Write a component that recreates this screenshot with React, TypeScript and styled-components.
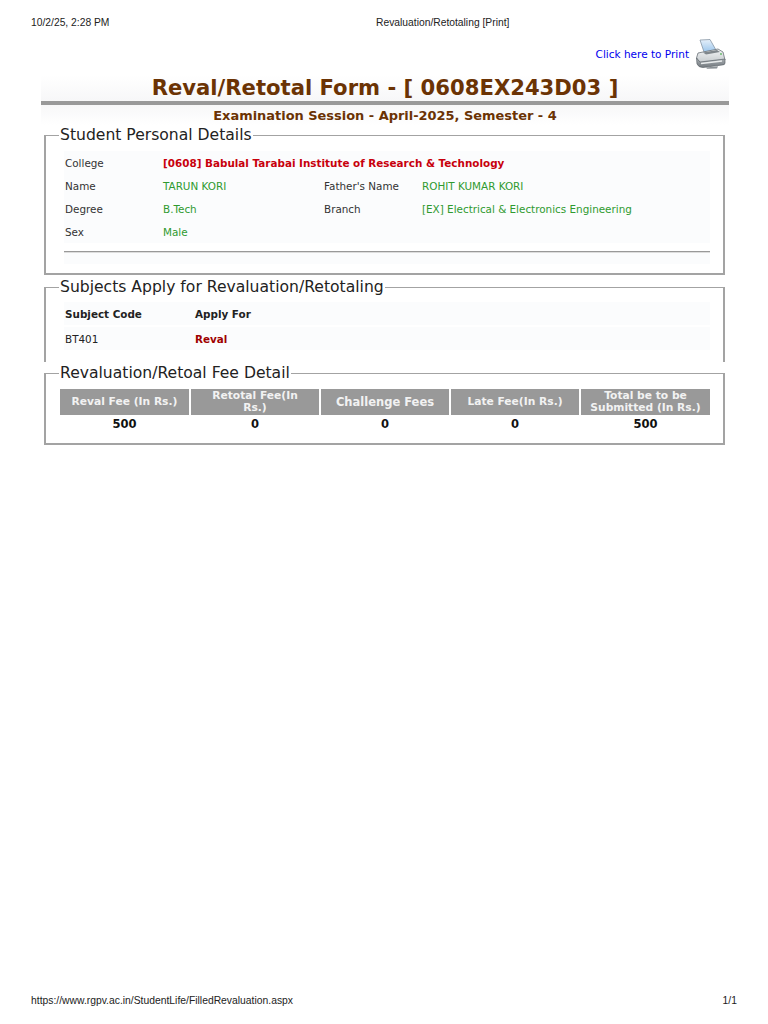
import React from "react";
import styled, { createGlobalStyle } from "styled-components";

const Global = createGlobalStyle`
  html, body { margin: 0; padding: 0; background: #fff; }
  body { font-family: "DejaVu Sans", Verdana, sans-serif; }
`;

const Page = styled.div`
  width: 768px;
  height: 1024px;
  display: flex;
  flex-direction: column;
  overflow: hidden;
  background: #fff;
`;

const PrintHeader = styled.header`
  display: grid;
  grid-template-columns: 345px auto 1fr;
  height: 12px;
  margin-top: 17px;
  padding: 0 31px;
  font: 10.3px/12px "Liberation Sans", Arial, sans-serif;
  color: #222;
`;

const PrintLink = styled.div`
  display: flex;
  justify-content: flex-end;
  align-items: center;
  gap: 6px;
  height: 30px;
  margin-top: 10px;
  padding-right: 42px;
  font-size: 10.5px;
  color: #0000ee;
`;

const Main = styled.main`
  display: flex;
  flex-direction: column;
  margin: 6px 39px 0 41px;
`;

const TitleBand = styled.div`
  height: 26px;
  background: linear-gradient(#ffffff, #f7f7f8);
  border-bottom: 4px solid #999;
  text-align: center;
  color: #6b3304;
  font-size: 21.15px;
  line-height: 26px;
  font-weight: 700;
`;

const SessionBand = styled.div`
  height: 20px;
  background: linear-gradient(#f7f7f8, #ffffff);
  text-align: center;
  color: #6b3304;
  font-size: 12.95px;
  line-height: 21px;
  font-weight: 700;
`;

const Section = styled.fieldset<{ $open?: boolean; $gap: number; $pad: number }>`
  margin: ${(p) => p.$gap}px 4px 0 3px;
  padding: 0 13px ${(p) => p.$pad}px 13px;
  border: 1px solid #a3a3a3;
  border-width: 1px 2px 2px 2px;
  border-bottom-width: ${(p) => (p.$open ? 0 : 2)}px;
  min-width: 0;
`;

const SectionTitle = styled.legend`
  padding: 0 1px;
  margin-left: 0;
  font-size: 15.6px;
  line-height: 18px;
  color: #222;
`;

const Rows = styled.div<{ $top: number }>`
  display: flex;
  flex-direction: column;
  margin-top: ${(p) => p.$top}px;
`;

const Row = styled.div`
  display: grid;
  grid-template-columns: 98px 161px 98px 1fr;
  align-items: center;
  height: 23px;
  padding-left: 1px;
  margin-left: 5px;
  background: #fbfcfd;
  font-size: 10.4px;
  color: #333;
`;

const Label = styled.span`
  color: #333;
`;

const Value = styled.span`
  color: #2f9a2f;
`;

const College = styled.span`
  grid-column: 2 / 5;
  color: #c8000c;
  font-weight: 700;
`;

const RuleRow = styled.div`
  height: 21px;
  margin-left: 5px;
  padding-top: 8px;
  box-sizing: border-box;
  background: linear-gradient(#fff 0, #fff 8px, #fbfcfd 8px);
`;

const Rule = styled.div`
  height: 1px;
  background: #999;
  box-shadow: 0 1px 0 #ddd;
`;

const SubjectRow = styled.div<{ $bold?: boolean }>`
  display: grid;
  grid-template-columns: 130px 1fr;
  align-items: center;
  height: 23px;
  margin: 0 0 2px 5px;
  padding-left: 1px;
  background: #fbfcfd;
  font-size: 10.4px;
  font-weight: ${(p) => (p.$bold ? 700 : 400)};
  color: #222;
`;

const Reval = styled.span`
  color: #a00000;
  font-weight: 700;
`;

const FeeTable = styled.div`
  display: grid;
  grid-template-columns: 129px repeat(3, 128px) 129px;
  column-gap: 2px;
  margin: 7px 0 0 1px;
`;

const FeeHead = styled.div<{ $large?: boolean }>`
  display: flex;
  align-items: center;
  justify-content: center;
  height: 26px;
  padding: 0 9px;
  background: #999;
  color: #f2f2f2;
  text-align: center;
  font-weight: 700;
  font-size: ${(p) => (p.$large ? 11.5 : 10.7)}px;
  line-height: 12.5px;
`;

const FeeValue = styled.div`
  height: 19px;
  text-align: center;
  color: #111;
  font-weight: 700;
  font-size: 11.5px;
  line-height: 19px;
`;

const PrintFooter = styled.footer`
  display: flex;
  justify-content: space-between;
  margin-top: auto;
  margin-bottom: 17px;
  padding: 0 31px;
  font: 10.35px/12px "Liberation Sans", Arial, sans-serif;
  color: #222;
`;

const PrinterIcon = () => (
  <svg width="31" height="30" viewBox="0 0 31 30" aria-hidden="true">
    <defs>
      <linearGradient id="paper" x1="0" y1="0" x2="0" y2="1">
        <stop offset="0" stopColor="#e6f0fa" />
        <stop offset="1" stopColor="#9cc6ec" />
      </linearGradient>
      <linearGradient id="body" x1="0" y1="0" x2="0" y2="1">
        <stop offset="0" stopColor="#f2f4f5" />
        <stop offset="1" stopColor="#c4c9cc" />
      </linearGradient>
      <linearGradient id="base" x1="0" y1="0" x2="0" y2="1">
        <stop offset="0" stopColor="#aab0b4" />
        <stop offset="1" stopColor="#73797e" />
      </linearGradient>
    </defs>
    <path d="M5 1 L15 0.5 L21 11 L9 13 Z" fill="url(#paper)" stroke="#7b8b9b" strokeWidth="0.7" />
    <path d="M3 14 L23 10 L28 13 L30 21 L5 24 L1.5 19 Z" fill="url(#body)" stroke="#6b7278" strokeWidth="0.8" />
    <path d="M8 13.5 L22 11 L25 13 L11 15.5 Z" fill="#7f868b" />
    <path d="M1.5 19 L5 23 L30 20 L30 24 Q30 26 27 26 L8 28.5 Q3.5 28.5 2 25 Z" fill="url(#base)" stroke="#5f666b" strokeWidth="0.7" />
    <path d="M6 24.5 L27 22" stroke="#e8ebec" strokeWidth="1.4" />
    <path d="M11 28.5 L23 27.2 L22 29.5 L12 29.8 Z" fill="#8a9095" />
    <circle cx="26" cy="15" r="0.9" fill="#62b862" />
  </svg>
);

const fees = [
  { head: "Reval Fee (In Rs.)", value: "500" },
  { head: "Retotal Fee(In Rs.)", value: "0" },
  { head: "Challenge Fees", value: "0", large: true },
  { head: "Late Fee(In Rs.)", value: "0" },
  { head: "Total be to be Submitted (In Rs.)", value: "500" },
];

export default function App() {
  return (
    <Page>
      <Global />
      <PrintHeader>
        <span>10/2/25, 2:28 PM</span>
        <span>Revaluation/Retotaling [Print]</span>
        <span />
      </PrintHeader>
      <PrintLink>
        <span>Click here to Print</span>
        <PrinterIcon />
      </PrintLink>
      <Main>
        <TitleBand>Reval/Retotal Form - [ 0608EX243D03 ]</TitleBand>
        <SessionBand>Examination Session - April-2025, Semester - 4</SessionBand>

        <Section $gap={1} $pad={9}>
          <SectionTitle>Student Personal Details</SectionTitle>
          <Rows $top={7}>
            <Row>
              <Label>College</Label>
              <College>[0608] Babulal Tarabai Institute of Research &amp; Technology</College>
            </Row>
            <Row>
              <Label>Name</Label>
              <Value>TARUN KORI</Value>
              <Label>Father's Name</Label>
              <Value>ROHIT KUMAR KORI</Value>
            </Row>
            <Row>
              <Label>Degree</Label>
              <Value>B.Tech</Value>
              <Label>Branch</Label>
              <Value>[EX] Electrical &amp; Electronics Engineering</Value>
            </Row>
            <Row>
              <Label>Sex</Label>
              <Value>Male</Value>
            </Row>
            <RuleRow>
              <Rule />
            </RuleRow>
          </Rows>
        </Section>

        <Section $gap={3} $pad={10} $open>
          <SectionTitle>Subjects Apply for Revaluation/Retotaling</SectionTitle>
          <Rows $top={6}>
            <SubjectRow $bold>
              <span>Subject Code</span>
              <span>Apply For</span>
            </SubjectRow>
            <SubjectRow>
              <span>BT401</span>
              <Reval>Reval</Reval>
            </SubjectRow>
          </Rows>
        </Section>

        <Section $gap={2} $pad={9}>
          <SectionTitle>Revaluation/Retoal Fee Detail</SectionTitle>
          <FeeTable>
            {fees.map((f) => (
              <FeeHead key={f.head} $large={f.large}>
                {f.head}
              </FeeHead>
            ))}
            {fees.map((f) => (
              <FeeValue key={f.head}>{f.value}</FeeValue>
            ))}
          </FeeTable>
        </Section>
      </Main>
      <PrintFooter>
        <span>https://www.rgpv.ac.in/StudentLife/FilledRevaluation.aspx</span>
        <span>1/1</span>
      </PrintFooter>
    </Page>
  );
}
